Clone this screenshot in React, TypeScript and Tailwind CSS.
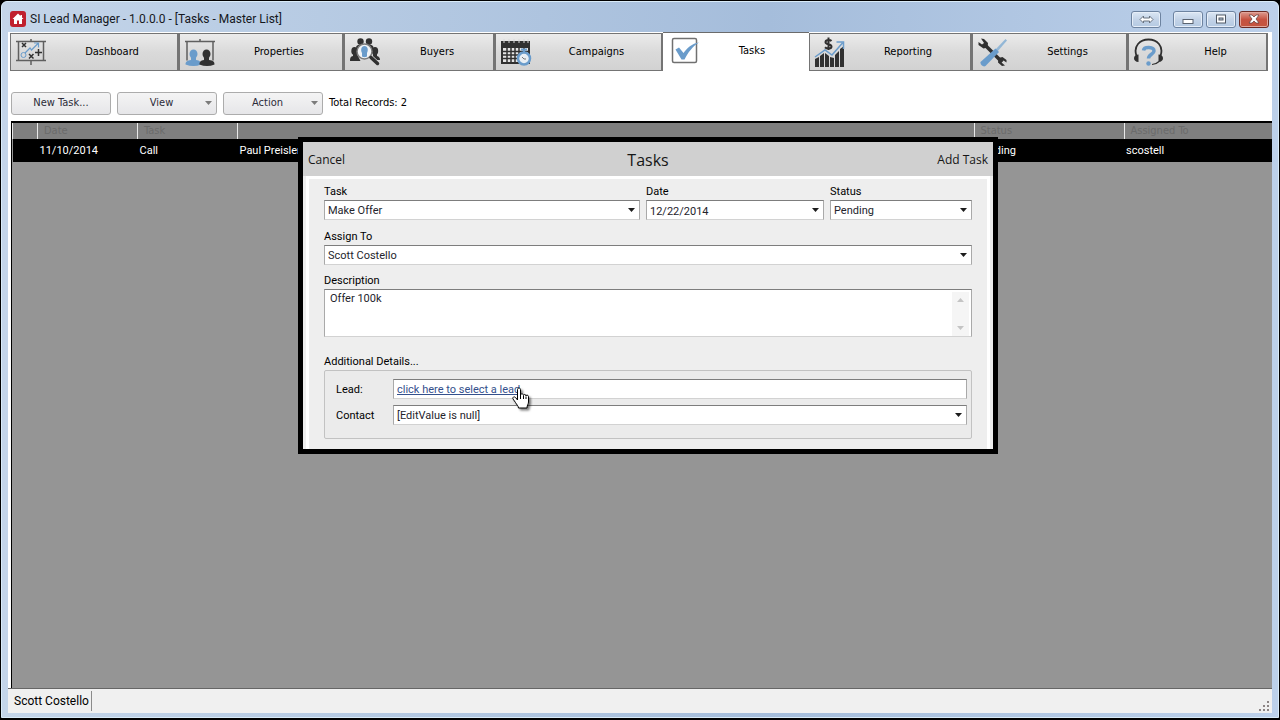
import type { ReactNode } from "react"

const BLUE = "#6a9ccb"
const INK = "#303030"

function DashboardIcon() {
  return (
    <svg viewBox="0 0 32 30" className="h-[30px] w-8 shrink-0" fill="none" stroke="#5f5f5f">
      <path d="M1 4.500h30M3.500 4.500v19h25v-19M1 23.500h30M16 2v2M16 24v4" strokeWidth="1.500" />
      <path d="M7 6l4 4M11 6l-4 4M14 17l4.500 4.500M18.500 17L14 21.500M20 15.500h7M23.500 12v7" stroke={INK} strokeWidth="1.500" />
      <circle cx="8.500" cy="18" r="2.500" stroke={BLUE} />
      <path d="M10 16l5-5 1.500 2L23 6.500M19 6h4.500v4.500" stroke={BLUE} strokeWidth="1.200" />
    </svg>
  )
}

function PropertiesIcon() {
  return (
    <svg viewBox="0 0 32 30" className="h-[30px] w-8 shrink-0">
      <path d="M1 4.500h30M3 4.500v19M29 4.500v19M16 2v2" fill="none" stroke="#5f5f5f" strokeWidth="1.500" />
      <g fill={BLUE}>
        <ellipse cx="9.500" cy="17" rx="4" ry="4.500" />
        <path d="M7 19h5v4c4 .5 5 2 5 4.500q-7.500 3-15.500 0c0-2.500 1.500-4 5.500-4.500z" />
      </g>
      <g fill={INK}>
        <ellipse cx="22.500" cy="17" rx="4" ry="4.500" />
        <path d="M20 19h5v4c4.500.5 5.500 2 5.500 4.500q-7.500 3-15 0c0-2.500 1-4 4.500-4.500z" />
      </g>
    </svg>
  )
}

function BuyersIcon() {
  return (
    <svg viewBox="0 0 32 30" className="h-[30px] w-8 shrink-0">
      <g fill={INK}>
        <circle cx="11.500" cy="4.500" r="3.200" />
        <circle cx="20" cy="4.500" r="3.200" />
        <path d="M7 10c1-3 7-3.500 8.500-1.500C17 6.500 23.500 7 24.500 10l-1 3H8z" />
        <ellipse cx="5.500" cy="14" rx="3.200" ry="4" />
        <path d="M4 17h4l3.500 7H1c0-3 .5-4.500 3-5z" />
        <ellipse cx="26" cy="14" rx="3.200" ry="4" />
        <path d="M24 17h4v2c2 .5 3 2 3 4h-7z" />
      </g>
      <circle cx="15.500" cy="14.500" r="7.500" fill="#f2f4f6" stroke="#7c7c7c" strokeWidth="1.500" />
      <path d="M21.500 20.500l6.500 6" stroke="#d8d8d8" strokeWidth="5.500" />
      <path d="M22 20.500l6.500 6" stroke={INK} strokeWidth="3.500" strokeLinecap="round" />
      <path d="M15.500 9c-3.500 0-4 4.500-2.500 7v3.500c1.500 1 3.500 1 5 0V16c1.500-2.500 1-7-2.500-7z" fill={BLUE} />
    </svg>
  )
}

function CampaignsIcon() {
  return (
    <svg viewBox="0 0 32 30" className="h-[30px] w-8 shrink-0">
      <path d="M1 4h29v23H1z" fill={INK} />
      <path d="M4 2v4M9 2v4M14 2v4M19 2v4M24 2v4M28 2v4" stroke="#d8d8d8" strokeWidth="1" />
      <path d="M3 11h25v14H3z" fill="#e4e4e4" />
      <path d="M3 14.500h25M3 18h25M3 21.500h25M7 11v14M11 11v14M15 11v14M19 11v14M24 11v14" stroke={INK} strokeWidth="1.500" />
      <path d="M21 12.500h6M24 12v4" stroke={BLUE} strokeWidth="2" />
      <circle cx="24" cy="21.500" r="6" fill="#e8eef3" stroke={BLUE} strokeWidth="2.500" />
      <path d="M22 20l2 2h2" fill="none" stroke="#777" />
    </svg>
  )
}

function TasksIcon() {
  return (
    <svg viewBox="0 0 32 30" className="h-[30px] w-8 shrink-0" fill="none">
      <rect x="1.500" y="2.500" width="24" height="24" rx="1.500" stroke="#707070" strokeWidth="1.500" />
      <path d="M4.500 13.500l3.500-2 4.500 5.500C16 12 21 7.500 28 6.500 21.500 10.500 17 16.500 13.500 23.500h-3z" fill={BLUE} />
    </svg>
  )
}

function ReportingIcon() {
  return (
    <svg viewBox="0 0 32 30" className="h-[30px] w-8 shrink-0">
      <path
        d="M1 22l4-2v10H1zM6 19l4-3v14H6zM11 16l4 3v11h-4zM16 20l4 1v9h-4zM21 18l4-4v16h-4zM26 12l4-3v21h-4z"
        fill={INK}
      />
      <path d="M1 20l10-7 7 5L28.500 6M22.500 5h7v7" fill="none" stroke={BLUE} strokeWidth="1.500" />
      <path
        d="M17.500 4c-2-2-6-1-6 1.200 0 2.500 6 1.500 6 4.300 0 2.500-4.500 2.800-6.500.8M14.500.5v12.500"
        fill="none"
        stroke={INK}
        strokeWidth="2"
      />
    </svg>
  )
}

function SettingsIcon() {
  return (
    <svg viewBox="0 0 32 30" className="h-[30px] w-8 shrink-0">
      <path d="M8 8l17 17" stroke={INK} strokeWidth="3.500" />
      <path d="M4 1.500l3 .5 4 4-.5 4.500-4 1-5-3.500V5l3.500 2.500L7 6z" fill={INK} />
      <path d="M28 28.500l-3 .5-4-3.500.5-4.500 4-1 4 3v2.500l-3-2-2 2z" fill={INK} />
      <path d="M28.500 2l1.500 1.500L20 15l-2-2z" fill="#93b7d6" />
      <path d="M18.500 11.500l3.500 3.500L8.500 29c-2 1.500-5.500-1-5-4z" fill={BLUE} />
    </svg>
  )
}

function HelpIcon() {
  return (
    <svg viewBox="0 0 32 30" className="h-[30px] w-8 shrink-0" fill="none">
      <path d="M3.500 19C0 9 7 2.500 15.500 2.500S31 9 27.500 19" stroke={INK} strokeWidth="1.800" />
      <path d="M5.500 17.500c-6 0-6 7.500 0 7.500zM25.500 17.500c6 0 6 7.500 0 7.500z" fill={INK} />
      <path d="M26 24.500c-2 2-4 3-7 3" stroke={INK} strokeWidth="1.200" />
      <path d="M10.500 13.500c.5-4 10.500-4 10.500.5 0 3.500-5.500 3-5.500 7.500" stroke={BLUE} strokeWidth="3.500" />
      <circle cx="15.500" cy="26.500" r="2.200" fill={BLUE} />
    </svg>
  )
}

const tabs = [
  { label: "Dashboard", icon: <DashboardIcon />, size: "basis-[169px]" },
  { label: "Properties", icon: <PropertiesIcon />, size: "basis-[165px]" },
  { label: "Buyers", icon: <BuyersIcon />, size: "basis-[151px]" },
  { label: "Campaigns", icon: <CampaignsIcon />, size: "basis-[168px]" },
  { label: "Tasks", icon: <TasksIcon />, size: "basis-[146px]" },
  { label: "Reporting", icon: <ReportingIcon />, size: "basis-[163px]" },
  { label: "Settings", icon: <SettingsIcon />, size: "basis-[156px]" },
  { label: "Help", icon: <HelpIcon />, size: "basis-[140px]" },
]

const activeTab = "Tasks"

const fieldStyle =
  "h-5 w-full appearance-none rounded-none border border-t-[#7d7d7d] border-r-[#a9a9a9] border-b-[#d2d2d2] border-l-[#a9a9a9] bg-white px-[3px] pt-0.5 text-[11px] leading-4 text-[#24242c] outline-none"

function Arrow({ className }: { className: string }) {
  return (
    <svg viewBox="0 0 7 4" className={`pointer-events-none h-1 w-[7px] ${className}`}>
      <path d="M0 0h7L3.500 4z" fill="currentColor" />
    </svg>
  )
}

function SelectBox({ id, value }: { id: string; value: string }) {
  return (
    <div className="relative flex-1">
      <select id={id} className={`${fieldStyle} block`} defaultValue={value}>
        <option>{value}</option>
      </select>
      <Arrow className="absolute top-2 right-[5px] text-[#1c1c1c]" />
    </div>
  )
}

function Field({ id, label, children }: { id: string; label: string; children: ReactNode }) {
  return (
    <div className="flex flex-col gap-px">
      <label htmlFor={id} className="text-[11px] leading-[14px]">
        {label}
      </label>
      {children}
    </div>
  )
}

function TitleBar() {
  const button = "flex h-[17px] w-[30px] items-center justify-center rounded-[3px] border border-[#6d83a0] bg-gradient-to-b from-[#dce7f4] via-[#c3d3e7] to-[#b4c9e2] shadow-[inset_0_0_0_1px_#e6eef8]"
  return (
    <header className="flex h-[30px] shrink-0 items-center pt-1 pr-[3px] pl-0.5">
      <svg viewBox="0 0 16 16" className="h-4 w-4">
        <rect width="16" height="16" rx="3" fill="#c0202e" />
        <path d="M8 2.500L2.500 8H4v5h3v-3.500h2V13h3V8h1.500L12 6.500V4h-1.500v1z" fill="#fff" />
      </svg>
      <h1 className="ml-1 flex-1 font-['Roboto',sans-serif] text-[12px] leading-4 text-[#15181d]">
        SI Lead Manager - 1.0.0.0 - [Tasks - Master List]
      </h1>
      <button aria-label="Resize" className={`${button} mr-3`}>
        <svg viewBox="0 0 15 9" className="h-[9px] w-[15px]">
          <path d="M1 4.500L4.500 1v2h6V1L14 4.500 10.500 8V6h-6v2z" fill="#fff" stroke="#68727f" />
        </svg>
      </button>
      <div className="flex gap-[3px]">
        <button aria-label="Minimize" className={button}>
          <svg viewBox="0 0 12 12" className="h-3 w-3">
            <rect x="1" y="6.500" width="10" height="4" fill="#fff" stroke="#5a6370" />
          </svg>
        </button>
        <button aria-label="Restore" className={button}>
          <svg viewBox="0 0 12 12" className="h-3 w-3">
            <rect x="1.500" y="2" width="9" height="8" fill="#fff" stroke="#4f5864" />
            <rect x="4" y="5" width="4" height="2" fill="#b8c8dc" stroke="#4f5864" />
          </svg>
        </button>
        <button
          aria-label="Close"
          className="flex h-[17px] w-[30px] items-center justify-center rounded-[3px] border border-[#6b2a24] bg-gradient-to-b from-[#dc9a90] via-[#c65241] to-[#c4553f] shadow-[inset_0_0_0_1px_#e2a69b]"
        >
          <svg viewBox="0 0 12 10" className="h-[10px] w-3">
            <path d="M1 1h3l2 2 2-2h3L8 5l3 4H8L6 7 4 9H1l3-4z" fill="#fff" stroke="#5c3b3b" strokeWidth=".7" />
          </svg>
        </button>
      </div>
    </header>
  )
}

function TabBar() {
  return (
    <nav className="flex h-[39px] items-end bg-white pr-1 pl-0.5">
      {tabs.map(tab => (
        <button
          key={tab.label}
          className={`flex grow items-center text-[11px] leading-4 text-black ${tab.size} ${
            tab.label === activeTab
              ? "h-[39px] border-t border-[#6b6b6b] bg-white pr-2 pb-0.5 pl-2"
              : "h-[38px] border-t border-r-2 border-b border-l border-[#747474] bg-gradient-to-b from-[#ebebeb] via-[#dadada] to-[#d2d2d2] pl-1"
          }`}
        >
          {tab.icon}
          <span className="flex-1 text-center">{tab.label}</span>
        </button>
      ))}
    </nav>
  )
}

function Toolbar() {
  const button = "flex h-[23px] w-[100px] items-center rounded-[3px] border border-[#acacac] bg-gradient-to-b from-[#f4f4f4] to-[#e6e6e9] text-[11px] leading-4 text-[#2b2b38]"
  return (
    <div className="flex h-[50px] items-center gap-1.5 bg-white pt-4 pb-0.5 pl-[3px]">
      <button className={button}>
        <span className="flex-1 text-center">New Task...</span>
      </button>
      <button className={button}>
        <span className="flex-1 text-center">View</span>
        <Arrow className="mr-1 text-[#7b7b7b]" />
      </button>
      <button className={button}>
        <span className="flex-1 text-center">Action</span>
        <Arrow className="mr-1 text-[#7b7b7b]" />
      </button>
      <span className="text-[11px] leading-4">Total Records: 2</span>
    </div>
  )
}

function TaskTable() {
  const head = "border-l border-[#e8e8e8] pl-1.5 text-left font-normal"
  return (
    <table className="w-full table-fixed border-collapse text-[11px] leading-[14px]">
      <colgroup>
        <col className="w-[25px]" />
        <col className="w-[100px]" />
        <col className="w-[100px]" />
        <col />
        <col className="w-[150px]" />
        <col className="w-[148px]" />
      </colgroup>
      <thead>
        <tr className="h-4 bg-[#7f7f7f] text-[#6b6b6b]">
          <th className={head} />
          <th className={head}>Date</th>
          <th className={head}>Task</th>
          <th className={head} />
          <th className={head}>Status</th>
          <th className={head}>Assigned To</th>
        </tr>
      </thead>
      <tbody className="font-['Roboto',sans-serif]">
        <tr className="h-[23px] bg-black text-white">
          <td />
          <td className="pt-px pl-0.5">11/10/2014</td>
          <td className="pt-px pl-0.5">Call</td>
          <td className="pt-px pl-0.5">Paul Preisler</td>
          <td className="pt-px pl-0.5">Pending</td>
          <td className="pt-px pl-0.5">scostell</td>
        </tr>
      </tbody>
    </table>
  )
}

function HandCursor() {
  return (
    <svg viewBox="0 0 18 24" className="pointer-events-none absolute top-[7px] left-[118px] z-10 h-6 w-[18px] drop-shadow-[2px_2px_1px_rgba(0,0,0,0.5)]">
      <path
        d="M5.500 13V2.500C5.500.5 8.500.5 8.500 2.500V8c0-1.500 3-1.500 3 .5 0-1.500 2.500-1.500 2.500.5 0-1.500 2.500-1 2.500.5V15c0 2-1.500 3-1.500 6H6.500c0-2-2-3.500-3-5.500L1 12c-.8-1.500 1-3 2.500-1.500z"
        fill="#fff"
        stroke="#000"
      />
      <path d="M8.500 8v4M11.500 9v3M14 9.500V12" stroke="#000" />
    </svg>
  )
}

function TaskDialog() {
  return (
    <form
      role="dialog"
      aria-labelledby="dialog-title"
      className="w-[700px] max-w-full border-[5px] border-black bg-[#eee] font-['Roboto',sans-serif]"
      onSubmit={e => e.preventDefault()}
    >
      <div className="grid h-[34px] grid-cols-3 items-center bg-[#d0d0d0] px-[5px] pt-0.5 font-['Open_Sans',sans-serif] text-[12px] leading-4 text-[#161616]">
        <button type="button" className="justify-self-start">
          Cancel
        </button>
        <h2 id="dialog-title" className="text-center text-[16px] leading-5">
          Tasks
        </h2>
        <button type="submit" className="justify-self-end">
          Add Task
        </button>
      </div>
      <div className="mx-[3px] border-x-[3px] border-t-[3px] border-white px-[15px] pt-1.5 pb-2.5">
        <div className="grid grid-cols-[316fr_178fr_142fr] gap-1.5">
          <Field id="task" label="Task">
            <SelectBox id="task" value="Make Offer" />
          </Field>
          <Field id="date" label="Date">
            <div className="relative">
              <input id="date" className={`${fieldStyle} block`} defaultValue="12/22/2014" />
              <button type="button" aria-label="Open calendar" className="absolute top-2 right-[5px]">
                <Arrow className="block text-[#1c1c1c]" />
              </button>
            </div>
          </Field>
          <Field id="status" label="Status">
            <SelectBox id="status" value="Pending" />
          </Field>
        </div>
        <div className="mt-2.5">
          <Field id="assign" label="Assign To">
            <SelectBox id="assign" value="Scott Costello" />
          </Field>
        </div>
        <div className="mt-[9px]">
          <Field id="description" label="Description">
            <div className="flex h-12 border border-t-[#7d7d7d] border-r-[#a9a9a9] border-b-[#d2d2d2] border-l-[#a9a9a9] bg-white">
              <textarea
                id="description"
                className="flex-1 resize-none overflow-hidden px-[5px] pt-px text-[11px] leading-4 text-[#24242c] outline-none"
                defaultValue="Offer 100k"
              />
              <div className="mt-0.5 mr-0.5 flex w-[17px] flex-col items-center justify-between bg-[#f5f5f5] py-1.5">
                <Arrow className="rotate-180 text-[#c4c4c4]" />
                <Arrow className="text-[#c4c4c4]" />
              </div>
            </div>
          </Field>
        </div>
        <fieldset className="mt-[18px]">
          <legend className="mb-px text-[11px] leading-[14px]">Additional Details...</legend>
          <div className="flex flex-col gap-1.5 rounded-[2px] border border-[#c2c2c2] bg-[#ebebeb] pt-2 pr-1 pb-[13px] pl-[11px]">
            <div className="flex items-center text-[11px] leading-[14px]">
              <span className="w-[57px] pt-0.5">Lead:</span>
              <div className={`${fieldStyle} relative flex flex-1 items-center`}>
                <a href="#lead" className="text-[#34508c] underline">
                  click here to select a lead
                </a>
                <HandCursor />
              </div>
            </div>
            <div className="flex items-center text-[11px] leading-[14px]">
              <label htmlFor="contact" className="w-[57px] pt-0.5">
                Contact
              </label>
              <SelectBox id="contact" value="[EditValue is null]" />
            </div>
          </div>
        </fieldset>
      </div>
    </form>
  )
}

function StatusBar() {
  return (
    <footer className="flex h-[25px] items-center justify-between border-t border-[#666] bg-[#f0f0f0] pl-1.5 font-['Roboto',sans-serif] text-[12px] text-black">
      <span className="border-r border-[#8b8b8b] pr-0.5 leading-5">Scott Costello</span>
      <svg viewBox="0 0 12 12" className="mt-2.5 mr-0.5 h-3 w-3 text-[#8c8484]">
        <path d="M9 1h2v2H9zM5 5h2v2H5zM9 5h2v2H9zM1 9h2v2H1zM5 9h2v2H5zM9 9h2v2H9z" fill="currentColor" />
      </svg>
    </footer>
  )
}

export default function App() {
  return (
    <div className="flex min-h-screen bg-black font-['DejaVu_Sans_Condensed','DejaVu_Sans',sans-serif] text-black">
      <div className="mt-px mr-px mb-0.5 ml-px flex flex-1 flex-col rounded-t-md border border-[#d9ebf8] bg-[#bdd1ea] bg-linear-to-r from-[#c4d5e9] via-[#a5bddb] via-60% to-[#bcd0ea] px-1.5 pb-1">
        <TitleBar />
        <TabBar />
        <Toolbar />
        <main className="relative flex flex-1 flex-col border-l-[3px] border-white bg-[#959595]">
          <div className="flex-1 border-t-2 border-l border-black">
            <TaskTable />
          </div>
          <div className="absolute inset-x-0 top-4 flex justify-center pl-[13px]">
            <TaskDialog />
          </div>
        </main>
        <StatusBar />
      </div>
    </div>
  )
}
